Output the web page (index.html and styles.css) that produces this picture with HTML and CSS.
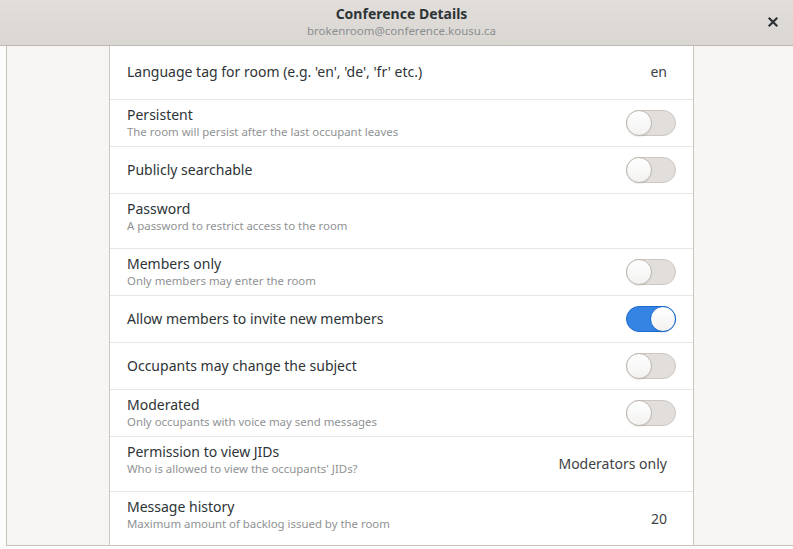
FILE: index.html
```html
<!DOCTYPE html>
<html>
<head>
<meta charset="utf-8">
<link rel="stylesheet" href="styles.css">
</head>
<body>
<header class="headerbar">
  <div class="titles">
    <div class="title">Conference Details</div>
    <div class="subtitle">brokenroom@conference.kousu.ca</div>
  </div>
  <button class="close" aria-label="Close">
    <svg width="16" height="16" viewBox="0 0 16 16"><path d="M4.5 4.5 L11.5 11.5 M11.5 4.5 L4.5 11.5" stroke="#2e3436" stroke-width="2.2" stroke-linecap="square" fill="none"/></svg>
  </button>
</header>
<main class="frame">
  <div class="list">
    <div class="row tall">
      <div class="text"><div class="name">Language tag for room (e.g. 'en', 'de', 'fr' etc.)</div></div>
      <div class="value">en</div>
    </div>
    <div class="row">
      <div class="text"><div class="name">Persistent</div><div class="desc">The room will persist after the last occupant leaves</div></div>
      <div class="switch"><span class="knob"></span></div>
    </div>
    <div class="row">
      <div class="text"><div class="name">Publicly searchable</div></div>
      <div class="switch"><span class="knob"></span></div>
    </div>
    <div class="row tall">
      <div class="text top"><div class="name">Password</div><div class="desc">A password to restrict access to the room</div></div>
    </div>
    <div class="row">
      <div class="text"><div class="name">Members only</div><div class="desc">Only members may enter the room</div></div>
      <div class="switch"><span class="knob"></span></div>
    </div>
    <div class="row">
      <div class="text"><div class="name">Allow members to invite new members</div></div>
      <div class="switch on"><span class="knob"></span></div>
    </div>
    <div class="row">
      <div class="text"><div class="name">Occupants may change the subject</div></div>
      <div class="switch"><span class="knob"></span></div>
    </div>
    <div class="row">
      <div class="text"><div class="name">Moderated</div><div class="desc">Only occupants with voice may send messages</div></div>
      <div class="switch"><span class="knob"></span></div>
    </div>
    <div class="row tall">
      <div class="text top"><div class="name">Permission to view JIDs</div><div class="desc">Who is allowed to view the occupants' JIDs?</div></div>
      <div class="value">Moderators only</div>
    </div>
    <div class="row tall">
      <div class="text top"><div class="name">Message history</div><div class="desc">Maximum amount of backlog issued by the room</div></div>
      <div class="value">20</div>
    </div>
  </div>
</main>
</body>
</html>
```

FILE: styles.css
```css
html, body {
  margin: 0;
  padding: 0;
}
body {
  width: 793px;
  height: 549px;
  overflow: hidden;
  background: #fcfcfc;
  font-family: "Noto Sans", "DejaVu Sans", sans-serif;
  color: #2e3436;
}
.headerbar {
  height: 45px;
  border-bottom: 1px solid #bfb8b1;
  background: linear-gradient(to top, #dad6d2, #e1dedb);
  display: flex;
  align-items: center;
  justify-content: center;
  position: relative;
  padding-left: 10px;
}
.titles {
  display: flex;
  flex-direction: column;
  align-items: center;
  margin-top: -1px;
}
.title {
  font-weight: bold;
  font-size: 14px;
  line-height: 18px;
  color: #2e3436;
}
.subtitle {
  font-size: 11.5px;
  line-height: 16px;
  color: #8b8e8f;
}
.close {
  position: absolute;
  right: 12px;
  top: 14px;
  width: 16px;
  height: 16px;
  padding: 0;
  border: 0;
  background: transparent;
}
.close svg { display: block; }
.frame {
  margin-left: 6px;
  height: 499px;
  border-left: 1px solid #c8c2bc;
  border-bottom: 1px solid #c8c2bc;
  background: #f6f5f4;
  overflow: hidden;
}
.list {
  margin-left: 102px;
  width: 583px;
  margin-top: -1px;
  background: #ffffff;
  border-left: 1px solid #cdc7c2;
  border-right: 1px solid #cdc7c2;
}
.row {
  height: 46px;
  border-bottom: 1px solid #e8e6e3;
  display: flex;
  align-items: center;
  padding: 0 17px 0 17px;
}
.row.tall {
  height: 54px;
}
.text {
  flex: 1;
  display: flex;
  flex-direction: column;
  padding-bottom: 2px;
}
.text.top {
  padding-bottom: 10px;
}
.name {
  font-size: 14px;
  line-height: 19px;
  color: #2e3436;
}
.desc {
  font-size: 11.4px;
  line-height: 15px;
  color: #8f9293;
}
.value {
  font-size: 14px;
  color: #3d4244;
  margin-right: 9px;
  padding-bottom: 2px;
}
.switch {
  width: 48px;
  height: 24px;
  border: 1px solid #cdc7c2;
  border-radius: 13px;
  background: #e1dedb;
  position: relative;
}
.knob {
  position: absolute;
  left: -1px;
  top: -1px;
  width: 24px;
  height: 24px;
  border-radius: 50%;
  border: 1px solid #bfb8b1;
  background: linear-gradient(to bottom, #ffffff, #f3f2f1);
  box-shadow: 0 1px 1px rgba(0,0,0,0.08);
}
.switch.on {
  background: #3584e4;
  border-color: #1b6acb;
}
.switch.on .knob {
  left: auto;
  right: -1px;
  border-color: #1b6acb;
}
```
